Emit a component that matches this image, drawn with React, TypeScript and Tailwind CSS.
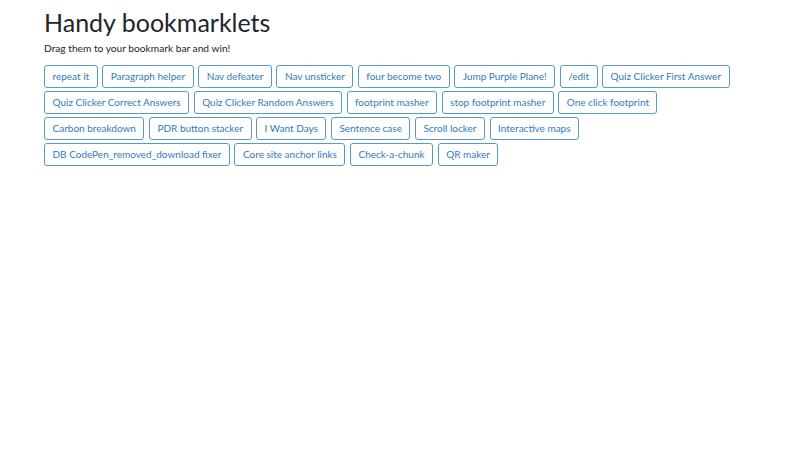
import React from "react";

const bookmarklets = [
  "repeat it",
  "Paragraph helper",
  "Nav defeater",
  "Nav unsticker",
  "four become two",
  "Jump Purple Plane!",
  "/edit",
  "Quiz Clicker First Answer",
  "Quiz Clicker Correct Answers",
  "Quiz Clicker Random Answers",
  "footprint masher",
  "stop footprint masher",
  "One click footprint",
  "Carbon breakdown",
  "PDR button stacker",
  "I Want Days",
  "Sentence case",
  "Scroll locker",
  "Interactive maps",
  "DB CodePen_removed_download fixer",
  "Core site anchor links",
  "Check-a-chunk",
  "QR maker",
];

export default function App() {
  return (
    <div className="min-h-[450px] bg-white pl-[44px] pt-[4px] text-[#212529] font-['Lato','Noto_Sans',sans-serif]">
      <h1 className="text-[25px] leading-[36px] font-normal">Handy bookmarklets</h1>
      <p className="text-[10.2px] leading-[16px]">Drag them to your bookmark bar and win!</p>
      <div className="mt-[9px] flex flex-wrap gap-x-[4.5px] gap-y-[3px] w-[706px]">
        {bookmarklets.map((name) => (
          <a
            key={name}
            href="#"
            className="inline-flex h-[23px] items-center rounded-[3px] border border-[#5a98c9] px-[7.5px] text-[10px] text-[#2f7bbd] hover:bg-[#337ab7] hover:text-white"
          >
            {name}
          </a>
        ))}
      </div>
    </div>
  );
}
